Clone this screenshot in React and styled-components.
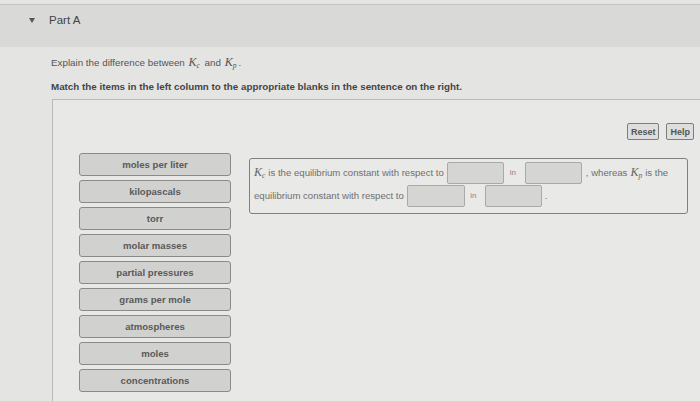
import React from 'react';
import styled, { createGlobalStyle } from 'styled-components';

const GlobalStyle = createGlobalStyle`
  html, body {
    margin: 0;
    padding: 0;
    background: #e4e4e2;
    font-family: "Liberation Sans", Arial, sans-serif;
    overflow: hidden;
  }
`;

const items = [
  'moles per liter',
  'kilopascals',
  'torr',
  'molar masses',
  'partial pressures',
  'grams per mole',
  'atmospheres',
  'moles',
  'concentrations',
];

const Page = styled.div`
  width: 700px;
  height: 401px;
  padding-top: 4px;
  box-sizing: border-box;
  display: flex;
  flex-direction: column;
`;

const Header = styled.div`
  height: 43px;
  border-top: 1px solid #c4c4c2;
  background: #d9d9d7;
  display: flex;
  align-items: flex-start;
  padding: 9px 0 0 29px;
  box-sizing: border-box;
  gap: 14px;
`;

const Caret = styled.span`
  width: 0;
  height: 0;
  margin-top: 4px;
  border-left: 3.5px solid transparent;
  border-right: 3.5px solid transparent;
  border-top: 5px solid #555;
`;

const PartTitle = styled.span`
  font-size: 11.5px;
  color: #444;
  line-height: 12px;
`;

const Content = styled.div`
  flex: 1;
  padding: 7px 0 0 51px;
  display: flex;
  flex-direction: column;
`;

const Prompt = styled.p`
  margin: 0;
  font-size: 9.8px;
  color: #555;
  line-height: 16px;
`;

const Instruction = styled.p`
  margin: 7px 0 0;
  font-size: 9.8px;
  font-weight: bold;
  color: #444;
  line-height: 12px;
`;

const Panel = styled.div`
  flex: 1;
  margin: 6px 0 0 1px;
  border-top: 1px solid #b9b9b7;
  border-left: 1px solid #b9b9b7;
  background: #e8e8e6;
  display: flex;
  flex-direction: column;
`;

const Toolbar = styled.div`
  display: flex;
  justify-content: flex-end;
  gap: 7px;
  padding: 23px 6px 0 0;
`;

const ToolButton = styled.button`
  height: 17px;
  padding: 0 3px;
  border: 1px solid #7d7d7b;
  border-radius: 2px;
  background: #dedede;
  font-family: "Liberation Sans", Arial, sans-serif;
  font-size: 9px;
  font-weight: bold;
  color: #555;
`;

const Body = styled.div`
  display: flex;
  align-items: flex-start;
  gap: 18px;
  padding: 13px 0 0 26px;
`;

const ItemList = styled.div`
  width: 152px;
  display: flex;
  flex-direction: column;
  gap: 4px;
`;

const Item = styled.div`
  height: 23px;
  box-sizing: border-box;
  border: 1.5px solid #8a8a88;
  border-radius: 3px;
  background: #d1d1cf;
  display: flex;
  align-items: center;
  justify-content: center;
  font-size: 9.6px;
  font-weight: bold;
  color: #5a5a5a;
`;

const Sentence = styled.div`
  margin-top: 5px;
  width: 439px;
  box-sizing: border-box;
  border: 1.5px solid #7f7f7d;
  border-radius: 3px;
  background: #e9e9e7;
  padding: 2px 4px 6px 4px;
  display: flex;
  flex-direction: column;
`;

const Line = styled.div`
  display: flex;
  align-items: center;
  height: 23px;
  font-size: 9.6px;
  color: #6f6f6f;
  white-space: nowrap;
`;

const Blank = styled.span`
  width: ${p => p.$w || 57}px;
  height: 22px;
  flex-shrink: 0;
  box-sizing: border-box;
  border: 1.5px solid #a9a9a7;
  border-radius: 2px;
  background: #d5d5d3;
  margin: 0 ${p => p.$mr || 0}px 0 ${p => p.$ml || 3}px;
`;

const Joiner = styled.span`
  width: ${p => p.$w}px;
  flex-shrink: 0;
  text-align: center;
  font-size: 8px;
  color: #888;
`;

const MathK = styled.span`
  font-family: "Liberation Serif", "Times New Roman", serif;
  font-style: italic;
  font-size: 12px;
  color: ${p => p.$c || '#555'};
  margin: 0 ${p => p.$mr || 2}px 0 ${p => p.$ml || 0}px;
  sub {
    font-size: 7.5px;
    vertical-align: -2px;
  }
`;

export default function App() {
  return (
    <>
      <GlobalStyle />
      <Page>
        <Header>
          <Caret />
          <PartTitle>Part A</PartTitle>
        </Header>
        <Content>
          <Prompt>
            Explain the difference between <MathK $ml={1}>K<sub>c</sub></MathK> and{' '}
            <MathK $ml={1}>K<sub>p</sub></MathK>.
          </Prompt>
          <Instruction>
            Match the items in the left column to the appropriate blanks in the sentence on the right.
          </Instruction>
          <Panel>
            <Toolbar>
              <ToolButton>Reset</ToolButton>
              <ToolButton>Help</ToolButton>
            </Toolbar>
            <Body>
              <ItemList>
                {items.map(t => (
                  <Item key={t}>{t}</Item>
                ))}
              </ItemList>
              <Sentence>
                <Line>
                  <MathK $c="#666" $mr={3}>K<sub>c</sub></MathK>
                  is the equilibrium constant with respect to
                  <Blank />
                  <Joiner $w={18}>in</Joiner>
                  <Blank $ml={0} $mr={4} />
                  , whereas <MathK $c="#666" $ml={3} $mr={3}>K<sub>p</sub></MathK> is the
                </Line>
                <Line>
                  equilibrium constant with respect to
                  <Blank $w={58} />
                  <Joiner $w={17}>in</Joiner>
                  <Blank $ml={0} $mr={3} />
                  .
                </Line>
              </Sentence>
            </Body>
          </Panel>
        </Content>
      </Page>
    </>
  );
}
